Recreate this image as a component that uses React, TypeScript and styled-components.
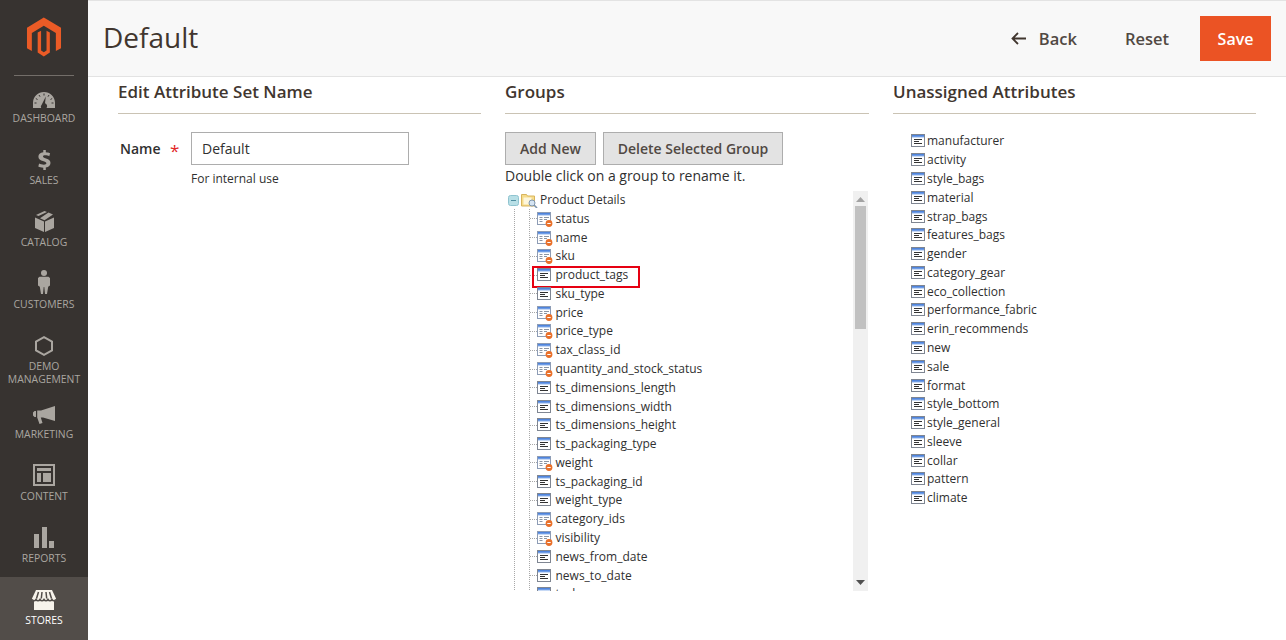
import React from "react";
import styled, { createGlobalStyle } from "styled-components";

const GlobalStyle = createGlobalStyle`
  html, body {
    margin: 0;
    padding: 0;
    height: 100%;
    background: #fff;
    overflow: hidden;
  }
  body {
    font-family: "Open Sans", "Liberation Sans", sans-serif;
    color: #41362f;
  }
  * {
    box-sizing: border-box;
  }
`;

const Page = styled.div`
  display: flex;
  width: 1286px;
  height: 640px;
  overflow: hidden;
`;

// Sidebar
const Sidebar = styled.nav`
  width: 88px;
  flex: none;
  background: #373330;
  display: flex;
  flex-direction: column;
`;

const LogoWrap = styled.div`
  height: 76px;
  margin: 0 14px;
  border-bottom: 1px solid #736e69;
  display: flex;
  justify-content: center;
  padding-top: 17px;
`;

const NavItem = styled.a<{ $active?: boolean; $tall?: boolean }>`
  height: ${(p) => (p.$active ? "63px" : p.$tall ? "68px" : "62px")};
  margin-top: ${(p) => (p.$active ? "-1px" : "0")};
  padding-top: ${(p) => (p.$active ? "1px" : "0")};
  display: flex;
  flex-direction: column;
  align-items: center;
  background: ${(p) => (p.$active ? "#524d49" : "transparent")};
  color: ${(p) => (p.$active ? "#fff" : "#aaa6a0")};
  font-size: 10.4px;
  line-height: 13px;
  text-align: center;
  text-transform: uppercase;
`;

const NavIcon = styled.span`
  height: 32px;
  display: flex;
  align-items: flex-end;
  justify-content: center;
  margin-bottom: 4px;
`;

// Main area
const Main = styled.div`
  flex: 1;
  min-width: 0;
  display: flex;
  flex-direction: column;
`;

const Header = styled.header`
  height: 77px;
  flex: none;
  background: #f8f8f8;
  border-top: 1px solid #e3e3e3;
  border-bottom: 1px solid #e3e3e3;
  display: flex;
  align-items: center;
  padding: 0 15px;
`;

const PageTitle = styled.h1`
  flex: 1;
  margin: 0 0 4px;
  font-size: 28px;
  font-weight: 400;
  color: #41362f;
`;

const HeaderLink = styled.button<{ $wide?: boolean }>`
  border: 0;
  background: none;
  padding: 0;
  font-family: inherit;
  font-size: 16.5px;
  font-weight: 600;
  color: #514943;
  display: flex;
  align-items: center;
  gap: 13px;
  margin-right: ${(p) => (p.$wide ? "48px" : "31px")};
`;

const SaveButton = styled.button`
  width: 71px;
  height: 45px;
  border: 0;
  background: #eb5324;
  color: #fff;
  font-family: inherit;
  font-size: 16px;
  font-weight: 600;
`;

const Columns = styled.main`
  display: grid;
  grid-template-columns: 363px 364px 363px;
  column-gap: 24px;
  padding-left: 30px;
`;

const Column = styled.section`
  min-width: 0;
`;

const ColumnTitle = styled.h2`
  height: 37px;
  margin: 0 0 18px;
  padding-top: 2px;
  border-bottom: 1px solid #cac3b4;
  font-size: 17px;
  line-height: 25px;
  font-weight: 600;
  color: #41362f;
`;

// Name form
const FieldRow = styled.div`
  display: flex;
  align-items: center;
  height: 33px;
  padding-left: 2px;
`;

const FieldLabel = styled.label`
  width: 50px;
  font-size: 14px;
  font-weight: 600;
  color: #303030;
`;

const Required = styled.span`
  width: 21px;
  color: #e22626;
  font-size: 17px;
  line-height: 33px;
  padding-top: 3px;
`;

const NameInput = styled.input`
  width: 218px;
  height: 33px;
  border: 1px solid #adadad;
  padding: 0 10px;
  font-family: inherit;
  font-size: 14px;
  color: #303030;
  background: #fff;
  outline: none;
`;

const FieldNote = styled.div`
  margin: 5px 0 0 73px;
  font-size: 12px;
  line-height: 17px;
  color: #303030;
`;

// Groups
const ButtonRow = styled.div`
  display: flex;
  gap: 7px;
`;

const GrayButton = styled.button<{ $width: number }>`
  width: ${(p) => p.$width}px;
  height: 33px;
  border: 1px solid #adadad;
  background: #e3e3e3;
  padding: 0;
  font-family: inherit;
  font-size: 14px;
  font-weight: 600;
  color: #514943;
`;

const Hint = styled.p`
  margin: 1px 0 6px 0;
  font-size: 14px;
  line-height: 19px;
  color: #303030;
`;

const TreePanel = styled.div`
  display: flex;
  height: 400px;
  width: 363px;
`;

const TreeScroll = styled.div`
  flex: 1;
  min-width: 0;
  overflow: hidden;
  font-size: 12px;
  color: #303030;
`;

const RootRow = styled.div`
  height: 18.38px;
  display: flex;
  align-items: center;
  padding-left: 3px;
  line-height: 18px;
`;

const RootChildren = styled.div`
  margin-left: 9px;
  border-left: 1px dotted #a8a8a8;
  padding-left: 14px;
`;

const ChildList = styled.div`
  border-left: 1px dotted #a8a8a8;
`;

const TreeRow = styled.div`
  position: relative;
  height: 18.79px;
  display: flex;
  align-items: center;
  line-height: 18px;
`;

const Connector = styled.span`
  width: 7px;
  height: 0;
  border-top: 1px dotted #a8a8a8;
  flex: none;
`;

const RowLabel = styled.span`
  margin-left: 2.5px;
  white-space: nowrap;
`;

const Highlight = styled.span`
  position: absolute;
  left: 2px;
  top: 0;
  width: 108px;
  height: 22px;
  border: 2px solid #e60012;
`;

const ScrollBar = styled.div`
  width: 15px;
  flex: none;
  background: #f0f0f0;
  display: flex;
  flex-direction: column;
  align-items: center;
  padding-top: 6px;
`;

const ScrollArrow = styled.svg<{ $end?: boolean }>`
  flex: none;
  display: block;
  margin-bottom: ${(p) => (p.$end ? "6px" : "0")};
`;

const ScrollThumb = styled.div`
  width: 11px;
  height: 123px;
  margin-top: 4px;
  background: #c1c1c1;
`;

const ScrollGap = styled.div`
  flex: 1;
`;

// Unassigned
const AttrList = styled.div`
  margin: 0.45px 0 0 18px;
  font-size: 12px;
  color: #303030;
`;

const AttrRow = styled.div`
  height: 18.79px;
  display: flex;
  align-items: center;
  line-height: 18px;
`;

const AttrLabel = styled.span`
  white-space: nowrap;
`;

const IconSvg = styled.svg<{ $gap?: boolean; $flat?: boolean }>`
  flex: none;
  margin: ${(p) => (p.$gap ? "0 2px" : p.$flat ? "0" : "1px 0 0")};
`;

const iconFill = "#aaa6a0";

const LogoIcon = () => (
  <svg width="36" height="40" viewBox="26 17 37 41">
    <path
      fill="#eb5b26"
      d="M44.3 17.5 62 28v21l-5.3 3V33.5L44.3 26 32 33.500V52l-5-3V28z"
    />
    <path
      fill="#eb5b26"
      d="M44.3 57.500 38 53.500V33l3.500-2v20.500l2.800 1.700 2.800-1.700V31l3.400 2v20.500z"
    />
  </svg>
);

const DashboardIcon = () => (
  <svg width="22" height="16" viewBox="0 0 22 16">
    <path
      fill={iconFill}
      d="M11 0C5 0 .3 4.600 0 10.500V16h8.200a3 3 0 0 1 .6-3.600L12.800 4.500 12 11.300a3 3 0 0 1 1.500 4.700H22v-5.500C21.700 4.600 17 0 11 0z"
    />
    <g stroke="#373330" strokeWidth="1">
      <path d="M11 1.500v2M6 3l1 1.700M2.800 6.500l1.700 1M1.500 11h2M16 3l-1 1.700M19.200 6.500l-1.700 1M20.500 11h-2" />
    </g>
  </svg>
);

const SalesIcon = () => (
  <svg width="13" height="20" viewBox="0 0 13 20">
    <path
      fill={iconFill}
      d="M5.300 0h2.500v2.200c1.700.1 3.300.5 4.300 1l-.8 3c-1-.4-2.500-.9-4.100-.9-1.500 0-2.200.5-2.200 1.200 0 .8.900 1.200 3 1.900 3 1 4.500 2.300 4.500 4.700 0 2.300-1.700 4-4.700 4.500V20H5.300v-2.200c-2-.1-3.900-.6-5-1.200l.8-3.100c1.200.6 3 1.200 4.800 1.200 1.500 0 2.500-.5 2.500-1.400 0-.8-.8-1.300-2.800-2C2.100 10.300.4 9 .4 6.700.4 4.500 2 2.800 5.300 2.300z"
    />
  </svg>
);

const CatalogIcon = () => (
  <svg width="19" height="21" viewBox="0 0 19 21">
    <path fill={iconFill} d="M0 6.500 9 10.500V21L0 17zM19 6.500 10 10.500V21l9-4z" />
    <path fill={iconFill} d="M9.500 0 12 1 3.500 4.900 1 3.900zM13.500 1.600 18 3.600 9.500 9.300 5 7.300z" />
  </svg>
);

const CustomersIcon = () => (
  <svg width="12" height="24" viewBox="0 0 12 24">
    <circle fill={iconFill} cx="6" cy="3" r="3" />
    <path
      fill={iconFill}
      d="M1.500 6.800h9L12 8v7.500l-1.800 1.200L9 24H7l-.7-7H5.700L5 24H3l-1.200-7.300L0 15.500V8z"
    />
  </svg>
);

const DemoIcon = () => (
  <svg width="18" height="20" viewBox="0 0 18 20">
    <path
      fill="none"
      stroke={iconFill}
      strokeWidth="2"
      d="M9 1.200 17 5.600v8.800l-8 4.400-8-4.400V5.600z"
    />
  </svg>
);

const MarketingIcon = () => (
  <svg width="22" height="18" viewBox="0 0 22 18">
    <path
      fill={iconFill}
      d="M22 0v15L10 11.500H7.800L9.500 17l-3 1-2.300-6.500V4.500H8zM3 5v6H1.500L0 9.500v-3L1.500 5z"
    />
  </svg>
);

const ContentIcon = () => (
  <svg width="22" height="22" viewBox="0 0 22 22">
    <path fill={iconFill} fillRule="evenodd" d="M0 0h22v22H0zM2 2v18h18V2z" />
    <path fill={iconFill} d="M4 4h14v3H4zM4 9h4v9H4zM10 9h8v9h-8z" />
  </svg>
);

const ReportsIcon = () => (
  <svg width="20" height="21" viewBox="0 0 20 21">
    <path fill={iconFill} d="M0 7h5v14H0zM8 0h5v21H8zM15 14h5v7h-5z" />
  </svg>
);

const StoresIcon = () => (
  <svg width="24" height="20" viewBox="0 0 24 20">
    <path
      fill="#f7f3eb"
      d="M4 0h16l4 8.500c0 1.500-1 2.300-2 2.300v9.200H2v-9.200c-1 0-2-.8-2-2.300z"
    />
    <path
      stroke="#524d49"
      strokeWidth="1.500"
      fill="none"
      d="M6.500 2 4.500 8.500M10 2 9.300 8.500M14 2l.7 6.500M17.500 2l2 6.500M0 9.500c1.500 1.600 3 1.600 4 0 1 1.600 3 1.600 4 0 1 1.600 3 1.600 4 0 1 1.600 3 1.600 4 0 1 1.600 3 1.600 4 0 1 1.600 2.500 1.600 4 0"
    />
  </svg>
);

const BackArrow = () => (
  <svg width="15" height="13" viewBox="0 0 15 13">
    <path
      fill="none"
      stroke="#41362f"
      strokeWidth="1.800"
      d="M15 6.500H1.500M7 1 1.500 6.500 7 12"
    />
  </svg>
);

const AttributeIcon: React.FC<{ system?: boolean }> = ({ system }) => (
  <IconSvg width="16" height="15" viewBox="0 0 16 15">
    <defs>
      <linearGradient id="attr-head" x1="0" y1="0" x2="0" y2="1">
        <stop offset="0" stopColor="#3f78d8" />
        <stop offset="1" stopColor="#8fb4ec" />
      </linearGradient>
    </defs>
    <rect
      x="0.500"
      y="0.500"
      width="13"
      height="12"
      fill="#fff"
      stroke={system ? "#8d9cb5" : "#7f8692"}
    />
    <rect x="1" y="1" width="12" height="2.500" fill="url(#attr-head)" />
    {system ? (
      <>
        <path stroke="#8c95a3" d="M2.500 5.500h3M2.500 7.500h3M2.500 9.500h3M7 5.500h5M7 7.500h3" fill="none" />
        <circle cx="12" cy="11.500" r="3.400" fill="#e9702a" />
        <path stroke="#fff" d="M10.300 11.500h3.400" />
      </>
    ) : (
      <path stroke="#333" d="M3 5.500h8M3 7.500h5M3 9.500h8" fill="none" />
    )}
  </IconSvg>
);

const MinusBox = () => (
  <IconSvg $flat width="11" height="11" viewBox="0 0 11 11">
    <rect x="0.500" y="0.500" width="10" height="10" rx="2" fill="#b8dfe6" stroke="#8fc4d0" />
    <path stroke="#4e8ea0" d="M3 5.500h5" />
  </IconSvg>
);

const FolderIcon = () => (
  <IconSvg $gap width="17" height="15" viewBox="0 0 17 15">
    <path d="M.5 1.500h5l1 1.500h7v10H.5z" fill="#f6dc8b" stroke="#d8b45c" />
    <rect x="2.500" y="4.500" width="8" height="7" fill="#fdf6dc" />
    <circle cx="11" cy="10" r="3" fill="#d5e4f2" stroke="#7e95ad" />
    <path stroke="#7e95ad" strokeWidth="1.600" d="m13 12 3 3" />
  </IconSvg>
);

const navItems = [
  { label: "Dashboard", icon: <DashboardIcon /> },
  { label: "Sales", icon: <SalesIcon /> },
  { label: "Catalog", icon: <CatalogIcon /> },
  { label: "Customers", icon: <CustomersIcon /> },
  { label: "Demo Management", icon: <DemoIcon />, tall: true },
  { label: "Marketing", icon: <MarketingIcon /> },
  { label: "Content", icon: <ContentIcon /> },
  { label: "Reports", icon: <ReportsIcon /> },
  { label: "Stores", icon: <StoresIcon />, active: true },
];

const treeItems = [
  { name: "status", system: true },
  { name: "name", system: true },
  { name: "sku", system: true },
  { name: "product_tags", marked: true },
  { name: "sku_type" },
  { name: "price", system: true },
  { name: "price_type", system: true },
  { name: "tax_class_id", system: true },
  { name: "quantity_and_stock_status", system: true },
  { name: "ts_dimensions_length" },
  { name: "ts_dimensions_width" },
  { name: "ts_dimensions_height" },
  { name: "ts_packaging_type" },
  { name: "weight", system: true },
  { name: "ts_packaging_id" },
  { name: "weight_type" },
  { name: "category_ids", system: true },
  { name: "visibility", system: true },
  { name: "news_from_date" },
  { name: "news_to_date" },
  { name: "tech_specs" },
];

const unassigned = [
  "manufacturer",
  "activity",
  "style_bags",
  "material",
  "strap_bags",
  "features_bags",
  "gender",
  "category_gear",
  "eco_collection",
  "performance_fabric",
  "erin_recommends",
  "new",
  "sale",
  "format",
  "style_bottom",
  "style_general",
  "sleeve",
  "collar",
  "pattern",
  "climate",
];

const App: React.FC = () => {
  return (
    <Page>
      <GlobalStyle />
      <Sidebar>
        <LogoWrap>
          <LogoIcon />
        </LogoWrap>
        {navItems.map((item) => (
          <NavItem key={item.label} $active={item.active} $tall={item.tall}>
            <NavIcon>{item.icon}</NavIcon>
            {item.label}
          </NavItem>
        ))}
      </Sidebar>
      <Main>
        <Header>
          <PageTitle>Default</PageTitle>
          <HeaderLink $wide>
            <BackArrow />
            Back
          </HeaderLink>
          <HeaderLink>Reset</HeaderLink>
          <SaveButton>Save</SaveButton>
        </Header>
        <Columns>
          <Column>
            <ColumnTitle>Edit Attribute Set Name</ColumnTitle>
            <FieldRow>
              <FieldLabel>Name</FieldLabel>
              <Required>*</Required>
              <NameInput defaultValue="Default" />
            </FieldRow>
            <FieldNote>For internal use</FieldNote>
          </Column>
          <Column>
            <ColumnTitle>Groups</ColumnTitle>
            <ButtonRow>
              <GrayButton $width={91}>Add New</GrayButton>
              <GrayButton $width={180}>Delete Selected Group</GrayButton>
            </ButtonRow>
            <Hint>Double click on a group to rename it.</Hint>
            <TreePanel>
              <TreeScroll>
                <RootRow>
                  <MinusBox />
                  <FolderIcon />
                  Product Details
                </RootRow>
                <RootChildren>
                  <ChildList>
                    {treeItems.map((item) => (
                      <TreeRow key={item.name}>
                        <Connector />
                        <AttributeIcon system={item.system} />
                        <RowLabel>{item.name}</RowLabel>
                        {item.marked && <Highlight />}
                      </TreeRow>
                    ))}
                  </ChildList>
                </RootChildren>
              </TreeScroll>
              <ScrollBar>
                <ScrollArrow width="9" height="5" viewBox="0 0 9 5">
                  <path fill="#a3a3a3" d="M4.500 0 9 5H0z" />
                </ScrollArrow>
                <ScrollThumb />
                <ScrollGap />
                <ScrollArrow $end width="9" height="5" viewBox="0 0 9 5">
                  <path fill="#505050" d="M0 0h9L4.500 5z" />
                </ScrollArrow>
              </ScrollBar>
            </TreePanel>
          </Column>
          <Column>
            <ColumnTitle>Unassigned Attributes</ColumnTitle>
            <AttrList>
              {unassigned.map((name) => (
                <AttrRow key={name}>
                  <AttributeIcon />
                  <AttrLabel>{name}</AttrLabel>
                </AttrRow>
              ))}
            </AttrList>
          </Column>
        </Columns>
      </Main>
    </Page>
  );
};

export default App;
